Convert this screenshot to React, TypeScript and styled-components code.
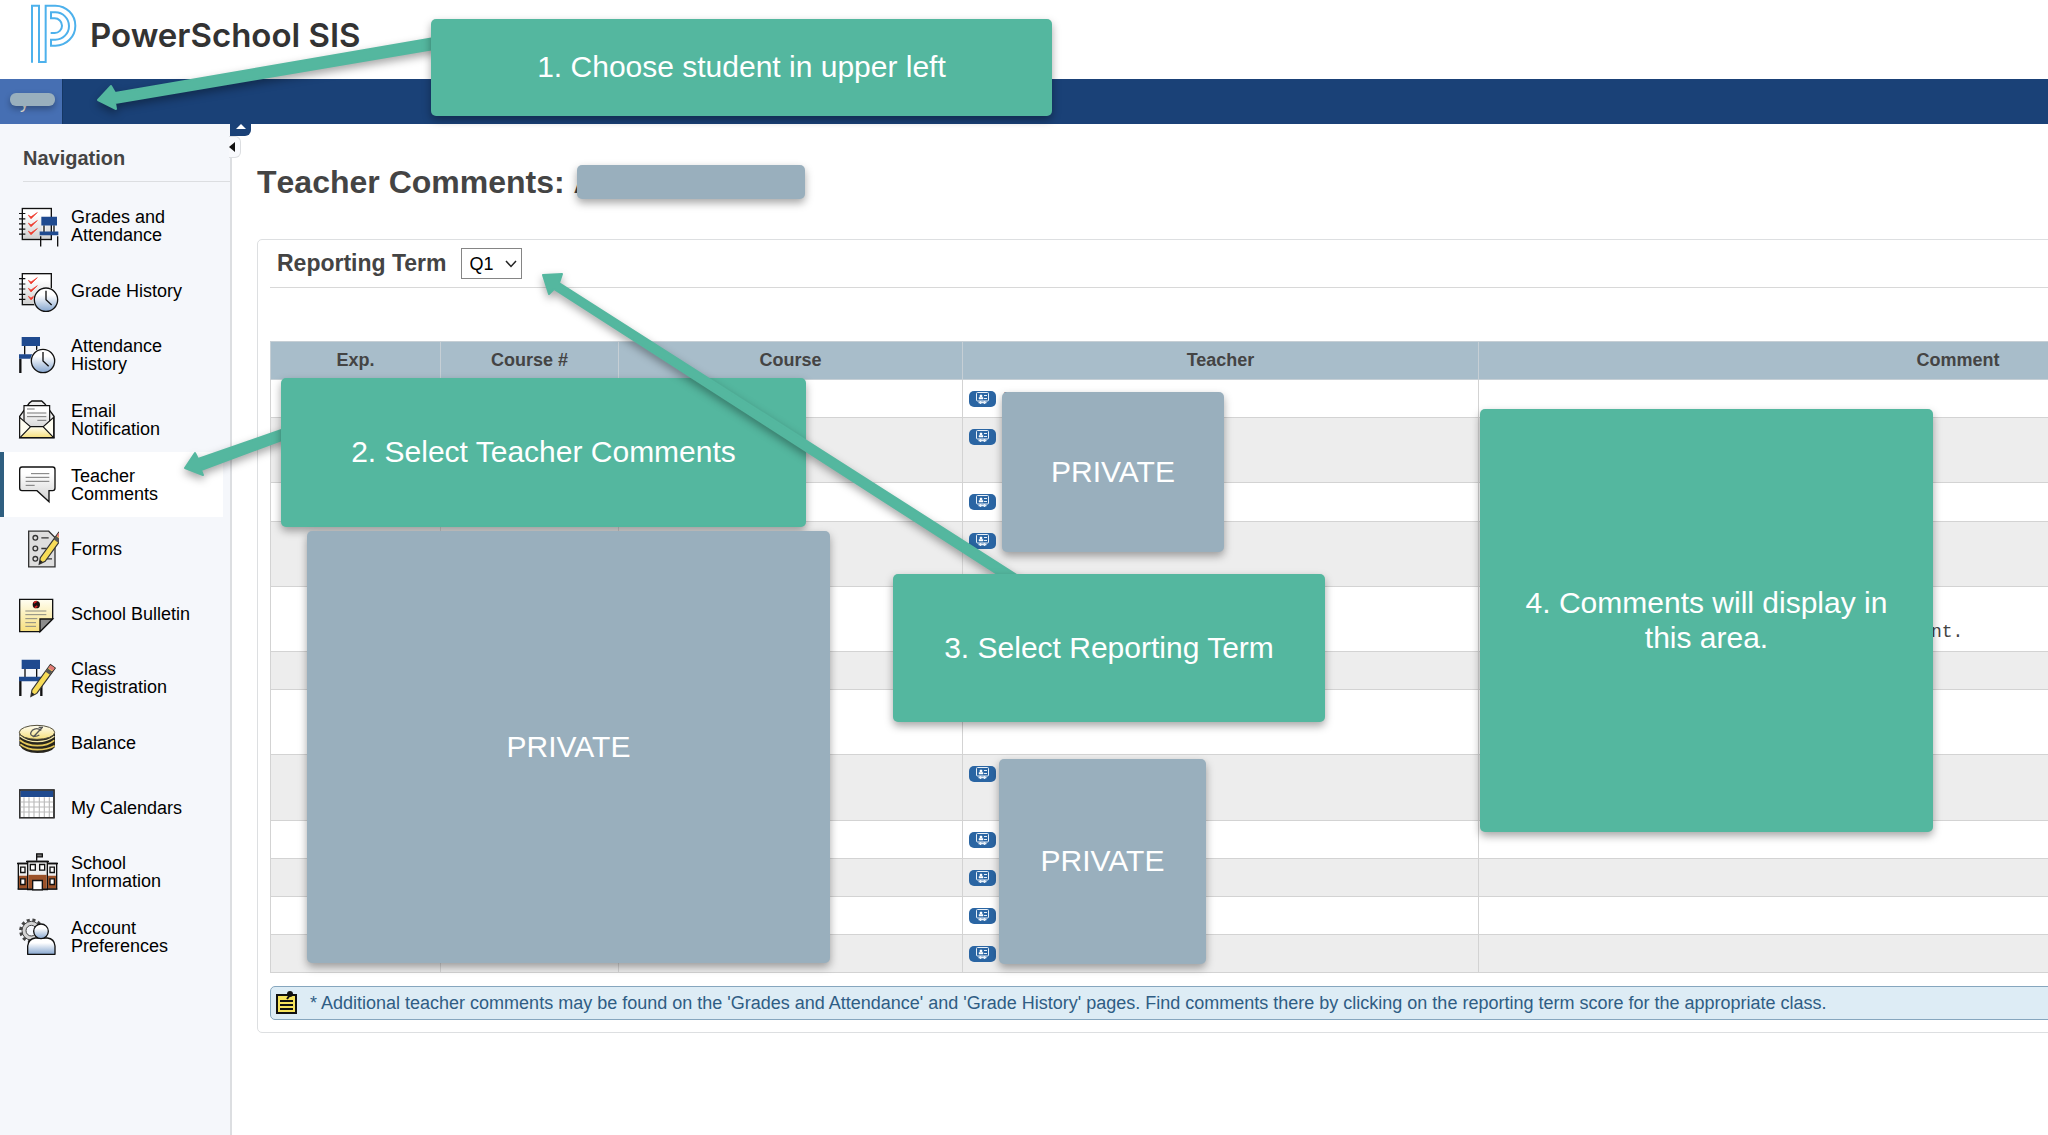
import React from "react";
import styled, { createGlobalStyle } from "styled-components";

const sans = '"Liberation Sans", Arial, Helvetica, sans-serif';

const GlobalStyle = createGlobalStyle`
  *, *::before, *::after { box-sizing: border-box; }
  body { margin: 0; background: #fff; font-family: ${sans}; color: #444; }
  button, select { font-family: inherit; }
`;

const Page = styled.div`
  position: relative;
  display: flex;
  flex-direction: column;
  min-height: 100vh;
  overflow: hidden;
`;

const Header = styled.header`
  display: flex;
  align-items: flex-start;
  gap: 12px;
  height: 79px;
  padding: 4px 30px;
`;

const Brand = styled.div`
  font: 600 33px/62px Inter, ${sans};
  color: #333;
`;

const StudentBar = styled.div`
  display: flex;
  height: 45px;
  background: #1a4177;
`;

const StudentTab = styled.button`
  position: relative;
  width: 63px;
  padding: 2px 0 0 20px;
  border: 0;
  border-right: 1px solid #153764;
  background: #466fb3;
  color: #e4e0d8;
  font-size: 18px;
  text-align: left;
`;

const NameCover = styled.span`
  position: absolute;
  left: 10px;
  top: 14px;
  width: 45px;
  height: 13px;
  border-radius: 6px;
  background: #99afbd;
  box-shadow: 0 3px 6px rgba(0, 0, 0, 0.3);
`;

const Body = styled.div`
  display: flex;
  flex: 1;
`;

const Sidebar = styled.nav`
  position: relative;
  flex: none;
  width: 232px;
  padding-top: 22px;
  border-right: 2px solid #dcdee1;
  background: #f5f7fb;
`;

const NavHeading = styled.h2`
  margin: 0 0 12px 23px;
  padding-bottom: 11px;
  border-bottom: 1px solid #dcdee1;
  font-size: 20px;
  line-height: 24px;
`;

const NavList = styled.ul`
  display: grid;
  grid-auto-rows: 1fr;
  height: 775px;
  margin: 0;
  padding: 0;
  list-style: none;
`;

const NavLink = styled.a<{ $active?: boolean }>`
  display: flex;
  align-items: center;
  gap: 12px;
  height: 100%;
  margin-right: 7px;
  padding: 0 30px 0 13px;
  border-left: 4px solid ${(p) => (p.$active ? "#2f5f80" : "transparent")};
  background: ${(p) => (p.$active ? "#fff" : "transparent")};
  color: #000;
  font-size: 18px;
  line-height: 18px;
  text-decoration: none;
  svg { flex: none; }
`;

const CollapseUp = styled.button`
  position: absolute;
  left: 230px;
  top: 0;
  display: grid;
  justify-items: center;
  width: 21px;
  height: 12px;
  padding: 0;
  border: 0;
  border-radius: 0 0 6px 0;
  background: #1a4177;
`;

const CollapseLeft = styled.button`
  position: absolute;
  left: 229px;
  top: 12px;
  display: grid;
  align-items: center;
  width: 12px;
  height: 22px;
  padding: 0;
  border: 1px solid #dcdee1;
  border-left: 0;
  border-radius: 0 6px 6px 0;
  background: #f8f9fc;
`;

const Main = styled.main`
  flex: 1;
  min-width: 0;
  padding: 39px 0 60px 25px;
`;

const Title = styled.h1`
  margin: 0 0 38px;
  font-size: 32px;
  line-height: 38px;
  font-kerning: none;
`;

const Panel = styled.section`
  width: max-content;
  padding: 0 12px 12px;
  border: 1px solid #dddfe1;
  border-radius: 5px;
`;

const PanelHeader = styled.div`
  display: flex;
  align-items: center;
  gap: 14px;
  height: 48px;
  padding-left: 7px;
  border-bottom: 1px solid #d8d8d8;
`;

const TermLabel = styled.label`
  font-size: 23px;
  font-weight: bold;
`;

const TermField = styled.span`
  position: relative;
  display: grid;
  svg {
    position: absolute;
    right: 5px;
    top: 12px;
    pointer-events: none;
  }
`;

const TermSelect = styled.select`
  appearance: none;
  width: 61px;
  height: 31px;
  padding: 0 8px;
  border: 1px solid #858585;
  border-radius: 0;
  background: #fff;
  color: #000;
  font-size: 18px;
`;

const Table = styled.table`
  table-layout: fixed;
  width: 2167px;
  margin-top: 53px;
  border-collapse: collapse;
`;

const Th = styled.th<{ $width: number }>`
  width: ${(p) => p.$width}px;
  height: 38px;
  padding: 0;
  border: 1px solid #c6cfd5;
  background: #a8bdca;
  font-size: 18px;
`;

const Row = styled.tr<{ $height: number }>`
  height: ${(p) => p.$height}px;
  &:nth-child(even) { background: #ededed; }
`;

const Td = styled.td`
  padding: 11px 6px 0;
  border: 1px solid #d3d3d3;
  vertical-align: top;
`;

const TeacherLinks = styled.div`
  display: flex;
  gap: 7px;
  height: 16px;
`;

const CardButton = styled.button`
  display: grid;
  justify-items: center;
  width: 27px;
  height: 16px;
  padding: 0;
  border: 0;
  border-radius: 5px;
  background: #2a65a3;
`;

const EmailLink = styled.a`
  color: #2f6794;
  font-size: 18px;
  line-height: 16px;
  text-decoration: none;
`;

const CommentText = styled.div`
  padding: 24px 0 0 446px;
  font: 18px/20px "Liberation Mono", monospace;
`;

const Note = styled.p`
  display: flex;
  align-items: center;
  gap: 12px;
  height: 34px;
  margin: 13px 0 0;
  padding-left: 5px;
  border: 1px solid #86a6be;
  border-radius: 5px;
  background: #ddecf5;
  color: #2f5d84;
  font-size: 18px;
`;

const Callout = styled.div<{
  $x: number;
  $y: number;
  $w: number;
  $h: number;
  $tone?: "note" | "cover";
}>`
  position: absolute;
  left: ${(p) => p.$x}px;
  top: ${(p) => p.$y}px;
  display: flex;
  align-items: center;
  justify-content: center;
  width: ${(p) => p.$w}px;
  height: ${(p) => p.$h}px;
  padding: 0 40px 2px;
  border-radius: 5px;
  background: ${(p) => (p.$tone === "cover" ? "#99afbd" : "#54b79f")};
  box-shadow: 0 4px 8px rgba(0, 0, 0, 0.35);
  color: #fff;
  font-size: 30px;
  line-height: 35px;
  text-align: center;
`;

const ArrowLayer = styled.svg`
  position: absolute;
  left: 0;
  top: 0;
  pointer-events: none;
  filter: drop-shadow(0 4px 4px rgba(0, 0, 0, 0.35));
`;

const Arrow = ({ points }: { points: string }) => (
  <ArrowLayer width="1100" height="640" aria-hidden="true">
    <polygon points={points} fill="#54b79f" stroke="#54b79f" strokeWidth="2" strokeLinejoin="round" />
  </ArrowLayer>
);

const Glyph = ({ top, children }: { top: number; children: React.ReactNode }) => (
  <svg width="42" height="42" viewBox={`51 ${top} 126 126`} fill="none" stroke="#111" strokeWidth="4" aria-hidden="true">
    {children}
  </svg>
);

const GradientDefs = styled.svg`
  position: absolute;
`;

const Gradients = () => (
  <GradientDefs width="0" height="0" aria-hidden="true">
    <defs>
      <linearGradient id="blueFade" x1="0" y1="0" x2="0" y2="1">
        <stop offset="0.3" stopColor="#fff" />
        <stop offset="1" stopColor="#86a6cf" />
      </linearGradient>
      <linearGradient id="greyFade" x1="0" y1="0" x2="0" y2="1">
        <stop offset="0.2" stopColor="#fff" />
        <stop offset="1" stopColor="#cfcfcf" />
      </linearGradient>
      <linearGradient id="yellowFade" x1="0" y1="0" x2="0" y2="1">
        <stop offset="0" stopColor="#fffef2" />
        <stop offset="1" stopColor="#f7df7c" />
      </linearGradient>
    </defs>
  </GradientDefs>
);

const Notebook = ({ y }: { y: number }) => (
  <g transform={`translate(0 ${y})`}>
    <rect x="67" y="2" width="87" height="93" fill="url(#greyFade)" />
    <path d="M57 17H76M57 33H76M57 48H76M57 64H76M57 79H76" strokeWidth="3.5" />
    <path
      d="M85 22L93 27L112 14L93 33ZM85 46L93 51L112 38L93 57ZM85 70L93 75L112 62L93 81Z"
      fill="#ee3a2c"
      stroke="#ee3a2c"
      strokeWidth="2"
    />
  </g>
);

const Clock = ({ x, y }: { x: number; y: number }) => (
  <g transform={`translate(${x} ${y})`}>
    <circle r="38" fill="#fff" stroke="none" />
    <circle r="35" fill="url(#blueFade)" />
    <path d="M0-27V0L17 16" />
  </g>
);

const Pencil = ({ x, y }: { x: number; y: number }) => (
  <g transform={`translate(${x} ${y}) rotate(36)`}>
    <path d="M-9-62H9V32L0 50L-9 32Z" fill="#f7dc58" stroke="#333" strokeWidth="3.5" />
    <path d="M-8-61H8V-50H-8Z" fill="#e37a78" stroke="none" />
    <path d="M-8-48H8V-36H-8Z" fill="#555" stroke="none" />
    <path d="M-5 38H5L0 49Z" fill="#222" stroke="none" />
  </g>
);

const GradesIcon = () => (
  <Glyph top={46.5}>
    <Notebook y={55} />
    <path d="M132 107V128M162 107V128" stroke="#fff" strokeWidth="9" />
    <path d="M132 107V128M162 107V128M122 140V171M173 140V171" />
    <path d="M124 82H171V108H124ZM119 126H175V137H119Z" fill="#1f4a8f" stroke="none" />
  </Glyph>
);

const GradeHistoryIcon = () => (
  <Glyph top={240}>
    <Notebook y={249} />
    <Clock x={138} y={329} />
  </Glyph>
);

const AttendanceIcon = () => (
  <Glyph top={434}>
    <path d="M74 470V496M110 470V490" />
    <path d="M61 508V551" strokeWidth="7" />
    <path d="M65 443H120V470H65ZM57 495H100V508H57Z" fill="#1f4a8f" stroke="none" />
    <Clock x={129} y={515} />
  </Glyph>
);

const MailIcon = () => (
  <Glyph top={628}>
    <path d="M59 680L88 640L96 634H125L134 642L162 680V744H59Z" fill="#eee" />
    <path d="M72 648H149V706L110 722L72 706Z" fill="url(#greyFade)" strokeWidth="3.5" />
    <path d="M59 683L92 712H129L161 683V744H59Z" fill="#fffdf0" strokeWidth="3.5" />
    <path d="M60 744L92 711H129L161 744Z" fill="url(#yellowFade)" strokeWidth="3.5" />
    <path d="M81 658H104M81 670H139M81 681H139M112 692H139" stroke="#777" strokeWidth="3" />
  </Glyph>
);

const CommentIcon = () => (
  <Glyph top={72}>
    <path d="M66 81H158Q165 81 165 89V144Q165 152 158 152H147V185L111 152H66Q59 152 59 144V89Q59 81 66 81Z" fill="url(#greyFade)" />
    <path d="M93 101H148M77 112H148M77 124H148M77 136H104" stroke="#777" strokeWidth="3" />
  </Glyph>
);

const FormsIcon = () => (
  <Glyph top={265.5}>
    <path d="M86 275H146L165 294V382H86Z" fill="#dedede" stroke="#333" />
    <g stroke="#333">
      <circle cx="106" cy="295" r="7" />
      <circle cx="106" cy="327" r="7" />
      <circle cx="106" cy="358" r="7" />
      <path d="M124 295H146M124 327H140M130 358H156" />
    </g>
    <Pencil x={147} y={334} />
  </Glyph>
);

const BulletinIcon = () => (
  <Glyph top={459}>
    <path d="M59 478H158V537L120 575H59Z" fill="url(#yellowFade)" />
    <path d="M158 537H120V575Z" fill="#8c8c8c" />
    <path d="M76 513H139M76 524H139M76 536H112M76 548H108M76 559H108" stroke="#8a8a80" strokeWidth="3" />
    <circle cx="109" cy="494" r="11" fill="#191010" stroke="none" />
    <path d="M101 489L110 484M104 503L112 498" stroke="#d61f1f" strokeWidth="5" />
  </Glyph>
);

const RegistrationIcon = () => (
  <Glyph top={653}>
    <path d="M75 688V714M110 688V714" />
    <path d="M61 724V770M124 724V770" strokeWidth="7" />
    <path d="M65 661H120V689H65ZM57 712H128V726H57Z" fill="#1f4a8f" stroke="none" />
    <Pencil x={122} y={731} />
  </Glyph>
);

const BalanceIcon = () => (
  <Glyph top={67}>
    <path d="M58 98V137Q72 160 112 160Q152 160 165 142V100Z" fill="#26241c" stroke="none" />
    <path d="M59 121Q80 138 112 138T163 122M61 134Q82 150 112 150T164 138" stroke="#e3c659" strokeWidth="5" />
    <path d="M59 108Q80 126 112 126T163 110" stroke="#f4e7a8" strokeWidth="4" />
    <ellipse cx="111" cy="98" rx="53" ry="21" fill="url(#yellowFade)" stroke="#55503c" strokeWidth="3" />
    <path d="M124 92Q110 82 97 92Q86 104 98 109Q108 112 118 106M100 112L128 82M116 83H129" stroke="#555" />
  </Glyph>
);

const CalendarIcon = () => (
  <Glyph top={261}>
    <rect x="59" y="270" width="103" height="83" fill="#fff" />
    <path d="M61 272H160V291H61Z" fill="#1f4a8f" stroke="none" />
    <path d="M72 292V351M87 292V351M102 292V351M118 292V351M133 292V351M148 292V351M61 306H160M61 321H160M61 336H160" stroke="#bcbcbc" strokeWidth="3.5" />
    <rect x="59" y="270" width="103" height="83" stroke="#333" />
  </Glyph>
);

const SchoolIcon = () => (
  <Glyph top={454.5}>
    <path d="M110 484V463H127V472H112" fill="#777" />
    <path d="M55 492H170V568H55Z" fill="#eee" />
    <path d="M57 529H168V567H57Z" fill="#9c5228" stroke="none" />
    <path d="M83 486H142V570H83Z" fill="#eee" />
    <path d="M85 526H140V568H85Z" fill="#9c5228" stroke="none" />
    <path d="M78 486H147M51 492H82M143 492H174" strokeWidth="5" />
    <path d="M98 543H127V571H98ZM91 495H106V512H91ZM119 495H134V512H119ZM62 503H75V519H62ZM150 503H163V519H150ZM62 538H75V555H62ZM150 538H163V555H150Z" fill="#fff" />
    <path d="M53 569H96M129 569H172" />
  </Glyph>
);

const AccountIcon = () => (
  <Glyph top={648}>
    <circle cx="94" cy="692" r="32" stroke="#444" strokeWidth="9" strokeDasharray="9 8" />
    <circle cx="94" cy="692" r="28" fill="#d4d4d4" stroke="#444" strokeWidth="3" />
    <circle cx="94" cy="692" r="16" fill="#f5f7fb" stroke="#444" strokeWidth="3" />
    <path d="M83 763V738Q86 716 106 714H142Q163 716 165 738V763Z" fill="url(#blueFade)" strokeLinejoin="round" />
    <circle cx="123" cy="694" r="22" fill="url(#blueFade)" />
  </Glyph>
);

const navItems: { label: string; icon: () => React.ReactElement; active?: boolean }[] = [
  { label: "Grades and Attendance", icon: GradesIcon },
  { label: "Grade History", icon: GradeHistoryIcon },
  { label: "Attendance History", icon: AttendanceIcon },
  { label: "Email Notification", icon: MailIcon },
  { label: "Teacher Comments", icon: CommentIcon, active: true },
  { label: "Forms", icon: FormsIcon },
  { label: "School Bulletin", icon: BulletinIcon },
  { label: "Class Registration", icon: RegistrationIcon },
  { label: "Balance", icon: BalanceIcon },
  { label: "My Calendars", icon: CalendarIcon },
  { label: "School Information", icon: SchoolIcon },
  { label: "Account Preferences", icon: AccountIcon },
];

const columns = [
  { label: "Exp.", width: 170 },
  { label: "Course #", width: 178 },
  { label: "Course", width: 344 },
  { label: "Teacher", width: 516 },
  { label: "Comment", width: 959 },
];

const rows: { height: number; email?: string; comment?: string }[] = [
  { height: 38, email: "Email" },
  { height: 65 },
  { height: 39 },
  { height: 65 },
  { height: 65, comment: "nt." },
  { height: 38 },
  { height: 65 },
  { height: 66 },
  { height: 38 },
  { height: 38 },
  { height: 38 },
  { height: 38 },
];

const Logo = () => (
  <svg width="48" height="60" viewBox="90 12 144 180" fill="none" stroke="#4db1ec" strokeWidth="6" aria-hidden="true">
    <path d="M96 188V17H117V186H137V17H166A60 60 0 0 1 166 137H153V119H166A41 41 0 0 0 166 37H153V55H164A22 22 0 0 1 164 99H152" />
  </svg>
);

const CardIcon = () => (
  <svg width="13" height="14" viewBox="0 0 13 14" fill="none" stroke="#e8f0f8" aria-hidden="true">
    <rect x="0.5" y="1.5" width="12" height="8.5" rx="1" />
    <path d="M3 8V6.5H7V8ZM4 4H6V6H4Z" fill="#fff" stroke="#fff" strokeWidth="0.5" />
    <path d="M8 4.5H11M8 7.5H11" />
    <path d="M2.5 11.5H10.5M4.5 10V13M8.5 10V13" strokeWidth="1.5" />
  </svg>
);

const NoteIcon = () => (
  <svg width="22" height="24" viewBox="0 0 22 24" fill="none" stroke="#111" strokeWidth="2" aria-hidden="true">
    <rect x="1" y="4" width="19" height="18" fill="#f7e45c" />
    <path d="M4 10H17M4 14H17M4 18H17" />
    <path d="M11 8L14 4" />
    <circle cx="14" cy="3" r="3" fill="#111" stroke="none" />
  </svg>
);

export default function App() {
  return (
    <Page>
      <GlobalStyle />
      <Gradients />
      <Header>
        <Logo />
        <Brand>PowerSchool SIS</Brand>
      </Header>
      <StudentBar>
        <StudentTab aria-label="Selected student">
          y
          <NameCover />
        </StudentTab>
      </StudentBar>
      <Body>
        <Sidebar>
          <NavHeading>Navigation</NavHeading>
          <NavList>
            {navItems.map(({ label, icon: Icon, active }) => (
              <li key={label}>
                <NavLink href="#" $active={active}>
                  <Icon />
                  {label}
                </NavLink>
              </li>
            ))}
          </NavList>
          <CollapseUp aria-label="Hide header">
            <svg width="10" height="5" aria-hidden="true">
              <path d="M0 5L5 0L10 5Z" fill="#fff" />
            </svg>
          </CollapseUp>
          <CollapseLeft aria-label="Hide navigation">
            <svg width="6" height="10" aria-hidden="true">
              <path d="M6 0L0 5L6 10Z" fill="#111" />
            </svg>
          </CollapseLeft>
        </Sidebar>
        <Main>
          <Title>Teacher Comments: A</Title>
          <Panel>
            <PanelHeader>
              <TermLabel htmlFor="term">Reporting Term</TermLabel>
              <TermField>
                <TermSelect id="term" defaultValue="Q1">
                  <option>Q1</option>
                </TermSelect>
                <svg width="12" height="8" fill="none" stroke="#222" strokeWidth="1.5" aria-hidden="true">
                  <path d="M1 1L6 6.5L11 1" />
                </svg>
              </TermField>
            </PanelHeader>
            <Table>
              <thead>
                <tr>
                  {columns.map((c) => (
                    <Th key={c.label} $width={c.width}>{c.label}</Th>
                  ))}
                </tr>
              </thead>
              <tbody>
                {rows.map((row, i) => (
                  <Row key={i} $height={row.height}>
                    <Td />
                    <Td />
                    <Td />
                    <Td>
                      <TeacherLinks>
                        <CardButton aria-label="Teacher details">
                          <CardIcon />
                        </CardButton>
                        {row.email && <EmailLink href="#">{row.email}</EmailLink>}
                      </TeacherLinks>
                    </Td>
                    <Td>{row.comment && <CommentText>{row.comment}</CommentText>}</Td>
                  </Row>
                ))}
              </tbody>
            </Table>
            <Note>
              <NoteIcon />
              * Additional teacher comments may be found on the 'Grades and Attendance' and 'Grade History' pages. Find
              comments there by clicking on the reporting term score for the appropriate class.
            </Note>
          </Panel>
        </Main>
      </Body>

      <Arrow points="98,100 111,86 115,93 440,37 440,48 115,103 116,109" />
      <Callout $x={431} $y={19} $w={621} $h={97}>1. Choose student in upper left</Callout>
      <Arrow points="185,468 195,453 198,459 290,427 290,437 201,470 203,475" />
      <Callout $x={281} $y={378} $w={525} $h={149}>2. Select Teacher Comments</Callout>
      <Callout $x={577} $y={165} $w={228} $h={34} $tone="cover" />
      <Arrow points="543,275 562,274 559,283 1023,579 1005,579 554,289 549,294" />
      <Callout $x={307} $y={531} $w={523} $h={432} $tone="cover">PRIVATE</Callout>
      <Callout $x={1002} $y={392} $w={222} $h={160} $tone="cover">PRIVATE</Callout>
      <Callout $x={893} $y={574} $w={432} $h={148}>3. Select Reporting Term</Callout>
      <Callout $x={999} $y={759} $w={207} $h={205} $tone="cover">PRIVATE</Callout>
      <Callout $x={1480} $y={409} $w={453} $h={423}>4. Comments will display in this area.</Callout>
    </Page>
  );
}
